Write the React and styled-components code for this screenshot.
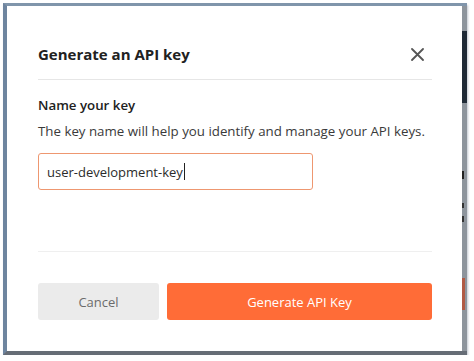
import styled, { createGlobalStyle } from "styled-components";

const GlobalStyle = createGlobalStyle`
  html, body {
    margin: 0;
    padding: 0;
    background: #fff;
  }
  body {
    font-family: "Open Sans", "Noto Sans", sans-serif;
    -webkit-font-smoothing: antialiased;
  }
`;

let Frame = styled.div`
  margin: 3px 0 0 3px;
  width: 464px;
  height: 352px;
  box-sizing: border-box;
  display: flex;
  flex-direction: row;
  border-top: 3px solid #8095ab;
  border-left: 4px solid #6e859f;
  border-bottom: 4px solid #666d76;
  box-shadow: 1px 2px 2px rgba(120, 130, 150, 0.45);
`;

let Dialog = styled.div`
  flex: 1;
  background: #fff;
  display: flex;
  flex-direction: column;
  padding: 0 30px 0 31px;
`;

let Peek = styled.div`
  width: 5px;
  background: #8d949c;
  display: flex;
  flex-direction: column;
`;

let PeekMark = styled.div`
  margin-top: ${(p) => p.top}px;
  height: ${(p) => p.h}px;
  width: ${(p) => p.w || 5}px;
  background: ${(p) => p.color};
`;

let Header = styled.div`
  display: flex;
  align-items: center;
  justify-content: space-between;
  height: 74px;
  padding-top: 23px;
  box-sizing: border-box;
  border-bottom: 1px solid #e6e6e6;
`;

let Title = styled.h2`
  margin: 0;
  font-size: 15px;
  font-weight: 700;
  color: #212121;
  line-height: 22px;
`;

let Close = styled.button`
  border: 0;
  background: none;
  padding: 0;
  margin-right: 8px;
  width: 14px;
  height: 14px;
  display: flex;
  align-items: center;
  justify-content: center;
  cursor: pointer;
`;

let Body = styled.div`
  padding-top: 15px;
  height: 172px;
  box-sizing: border-box;
  border-bottom: 1px solid #efefef;
`;

let Label = styled.div`
  font-size: 13.3px;
  font-weight: 600;
  color: #212121;
  line-height: 20px;
`;

let Help = styled.div`
  margin-top: 6px;
  font-size: 13.3px;
  color: #3a3a3a;
  line-height: 20px;
  white-space: nowrap;
`;

let Input = styled.div`
  margin-top: 12px;
  width: 275px;
  height: 37px;
  box-sizing: border-box;
  border: 1px solid #ee9770;
  border-radius: 3px;
  padding: 0 8px;
  display: flex;
  align-items: center;
  font-size: 13px;
  color: #2b2b2b;
`;

let Caret = styled.span`
  display: inline-block;
  width: 1px;
  height: 17px;
  background: #222;
  margin-left: 1px;
`;

let Footer = styled.div`
  display: flex;
  gap: 8px;
  padding-top: 31px;
`;

let Button = styled.button`
  height: 37px;
  border: 0;
  border-radius: 3px;
  font-family: inherit;
  font-size: 13px;
  cursor: pointer;
  width: ${(p) => (p.primary ? "auto" : "121px")};
  flex: ${(p) => (p.primary ? 1 : "none")};
  background: ${(p) => (p.primary ? "#ff6c37" : "#ebebeb")};
  color: ${(p) => (p.primary ? "#fff" : "#6b6b6b")};
`;

function CloseIcon() {
  return (
    <svg width="13" height="13" viewBox="0 0 13 13">
      <path
        d="M1 1 L12 12 M12 1 L1 12"
        stroke="#555"
        strokeWidth="1.8"
        strokeLinecap="round"
      />
    </svg>
  );
}

export default function App() {
  return (
    <>
      <GlobalStyle />
      <Frame>
        <Dialog>
          <Header>
            <Title>Generate an API key</Title>
            <Close aria-label="Close">
              <CloseIcon />
            </Close>
          </Header>
          <Body>
            <Label>Name your key</Label>
            <Help>The key name will help you identify and manage your API keys.</Help>
            <Input>
              user-development-key
              <Caret />
            </Input>
          </Body>
          <Footer>
            <Button>Cancel</Button>
            <Button primary>Generate API Key</Button>
          </Footer>
        </Dialog>
        <Peek>
          <PeekMark top={25} h={72} color="#1f2a36" />
          <PeekMark top={68} h={8} w={2} color="#222" />
          <PeekMark top={24} h={5} w={2} color="#333" />
          <PeekMark top={8} h={6} w={2} color="#333" />
          <PeekMark top={56} h={32} w={3} color="#b05a44" />
        </Peek>
      </Frame>
    </>
  );
}
